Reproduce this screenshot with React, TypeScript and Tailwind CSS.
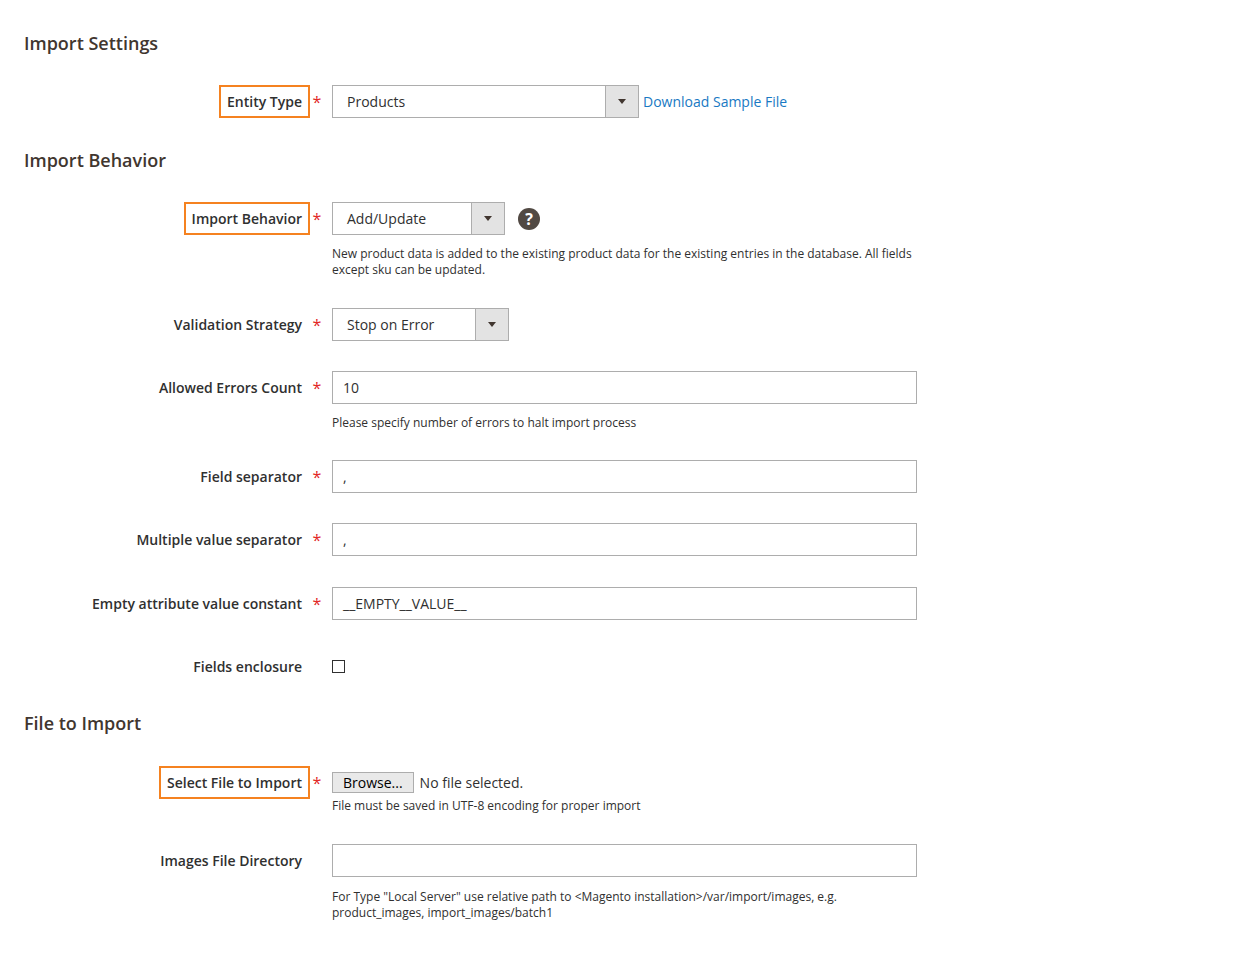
import React from "react";

const font = { fontFamily: '"Open Sans", "Liberation Sans", sans-serif' };

function Label({ text, hl, req = true }: { text: string; hl?: boolean; req?: boolean }) {
  return (
    <div className="flex w-[308px] shrink-0 items-center justify-end h-[33px]">
      <span
        className={
          "text-[14px] font-semibold text-[#303030] " +
          (hl ? "border-2 border-[#f58220] px-[6px] py-[4px] -mx-[8px] -my-[6px]" : "")
        }
      >
        {text}
      </span>
      <span className="w-[30px] text-center text-[#e22626] text-[16px]">{req ? "*" : ""}</span>
    </div>
  );
}

function Select({ value, w }: { value: string; w: string }) {
  return (
    <div className={"flex h-[33px] border border-[#adadad] bg-white " + w}>
      <div className="flex-1 flex items-center pl-[14px] text-[14px] text-[#303030]">{value}</div>
      <div className="w-[33px] border-l border-[#adadad] bg-[#e3e3e3] flex items-center justify-center">
        <svg width="8" height="5" viewBox="0 0 8 5"><path d="M0 0h8L4 5z" fill="#41362f" /></svg>
      </div>
    </div>
  );
}

function Input({ value = "" }: { value?: string }) {
  return (
    <div className="w-[585px] h-[33px] border border-[#adadad] flex items-center pl-[10px] text-[14px] text-[#303030]">
      {value}
    </div>
  );
}

function Note({ children, mt }: { children: React.ReactNode; mt: string }) {
  return <div className={"text-[12px] leading-[16px] text-[#303030] w-[585px] " + mt}>{children}</div>;
}

function Row({ label, hl, req, children, mt }: { label: string; hl?: boolean; req?: boolean; children: React.ReactNode; mt: string }) {
  return (
    <div className={"flex items-start " + mt}>
      <Label text={label} hl={hl} req={req} />
      <div>{children}</div>
    </div>
  );
}

function H({ children, mt }: { children: React.ReactNode; mt: string }) {
  return <h2 className={"text-[18px] font-semibold text-[#41362f] leading-[26px] " + mt}>{children}</h2>;
}

export default function App() {
  return (
    <div className="w-[1255px] h-[972px] bg-white pl-[24px] pt-[30px]" style={font}>
      <H mt="">Import Settings</H>
      <Row label="Entity Type" hl mt="mt-[29px]">
        <div className="flex items-center">
          <Select value="Products" w="w-[307px]" />
          <span className="ml-[4px] text-[14px] text-[#1979c3]">Download Sample File</span>
        </div>
      </Row>
      <H mt="mt-[29px]">Import Behavior</H>
      <Row label="Import Behavior" hl mt="mt-[29px]">
        <div className="flex items-center">
          <Select value="Add/Update" w="w-[173px]" />
          <div className="ml-[13px] w-[22px] h-[22px] rounded-full bg-[#514943] text-white text-[16px] font-bold flex items-center justify-center">?</div>
        </div>
        <Note mt="mt-[11px]">
          New product data is added to the existing product data for the existing entries in the database. All fields except sku can be updated.
        </Note>
      </Row>
      <Row label="Validation Strategy" mt="mt-[30px]">
        <Select value="Stop on Error" w="w-[177px]" />
      </Row>
      <Row label="Allowed Errors Count" mt="mt-[30px]">
        <Input value="10" />
        <Note mt="mt-[11px]">Please specify number of errors to halt import process</Note>
      </Row>
      <Row label="Field separator" mt="mt-[29px]">
        <Input value="," />
      </Row>
      <Row label="Multiple value separator" mt="mt-[30px]">
        <Input value="," />
      </Row>
      <Row label="Empty attribute value constant" mt="mt-[31px]">
        <Input value="__EMPTY__VALUE__" />
      </Row>
      <Row label="Fields enclosure" req={false} mt="mt-[30px]">
        <div className="h-[33px] flex items-center">
          <div className="w-[13px] h-[13px] border border-[#303030] bg-white" />
        </div>
      </Row>
      <H mt="mt-[27px]">File to Import</H>
      <Row label="Select File to Import" hl mt="mt-[30px]">
        <div className="h-[33px] flex items-center">
          <div className="h-[21px] px-[10px] border border-[#adadad] bg-[#e9e9e9] text-[14px] text-black flex items-center">Browse...</div>
          <span className="ml-[6px] text-[14px] text-[#303030]">No file selected.</span>
        </div>
        <Note mt="mt-[-1px]">File must be saved in UTF-8 encoding for proper import</Note>
      </Row>
      <Row label="Images File Directory" req={false} mt="mt-[30px]">
        <Input />
        <Note mt="mt-[12px]">
          For Type "Local Server" use relative path to &lt;Magento installation&gt;/var/import/images, e.g. product_images, import_images/batch1
        </Note>
      </Row>
    </div>
  );
}
